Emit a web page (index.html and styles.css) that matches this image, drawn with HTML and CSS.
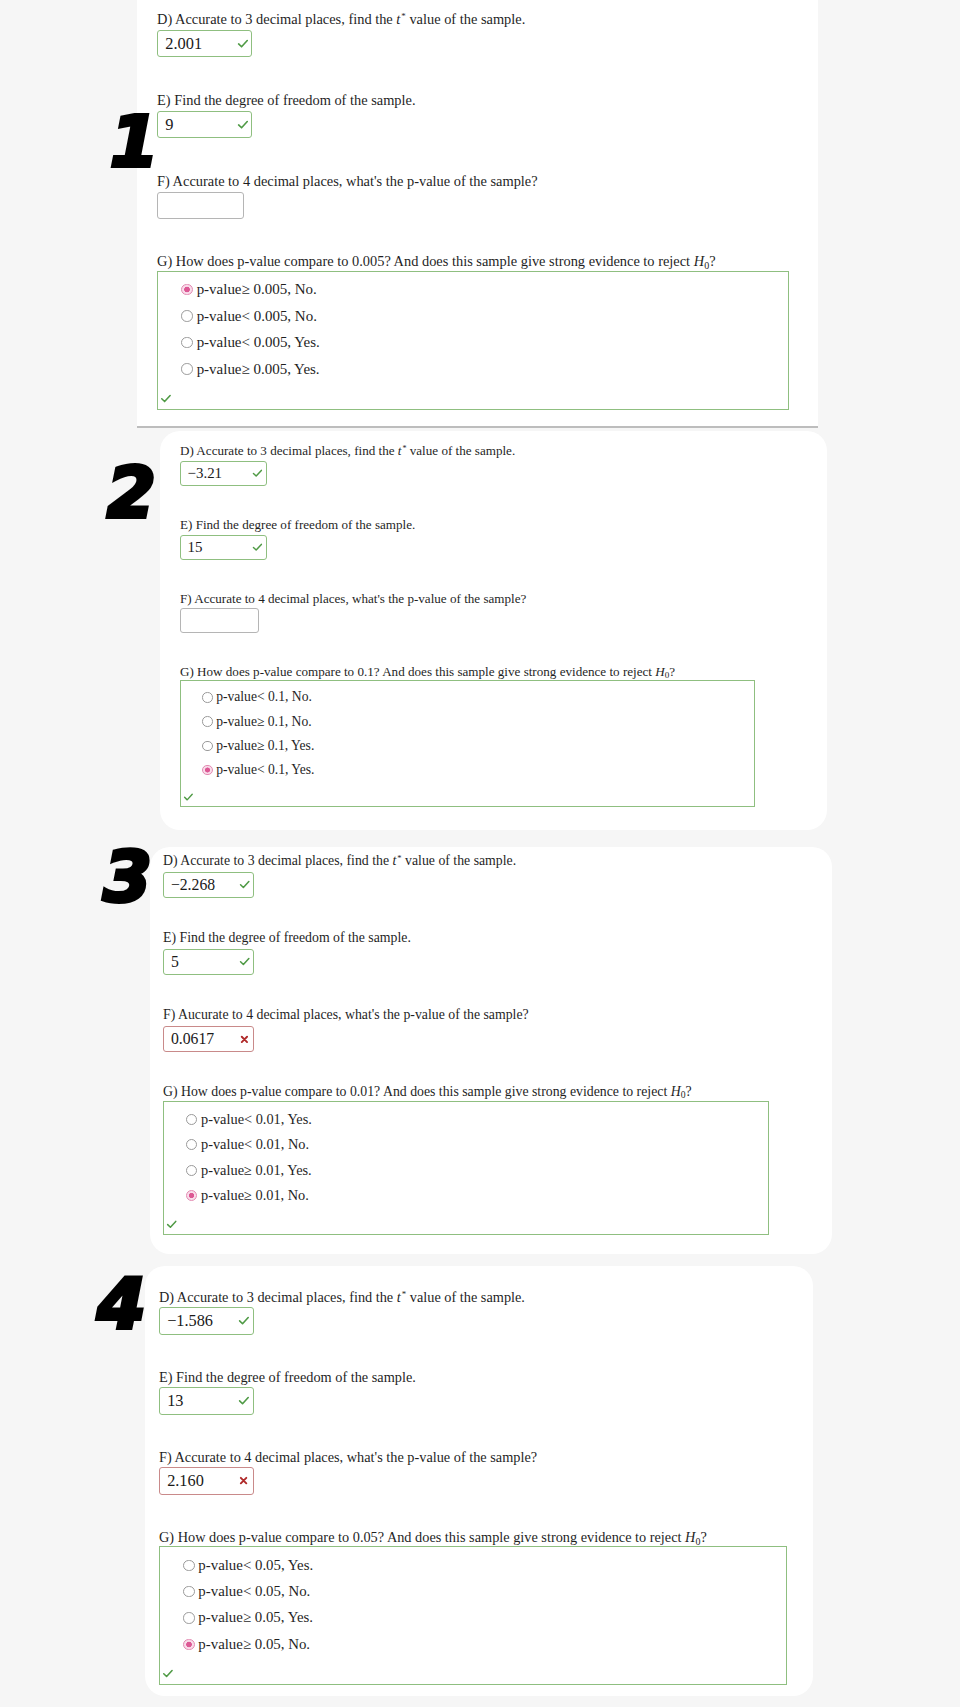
FILE: index.html
```html
<!DOCTYPE html>
<html>
<head>
<meta charset="utf-8">
<link rel="stylesheet" href="styles.css">
</head>
<body>
<div class="page">

<section class="panel p1">
  <span class="num n1">1</span>
  <div class="q">
    <div class="label">D) Accurate to 3 decimal places, find the <i>t</i><sup class="sup">*</sup> value of the sample.</div>
    <div class="field ok"><span class="val">2.001</span><svg class="tick" viewBox="0 0 12 10"><path d="M1.5 5.2 L4.6 8.2 L10.6 1.6"/></svg></div>
  </div>
  <div class="q">
    <div class="label">E) Find the degree of freedom of the sample.</div>
    <div class="field ok"><span class="val">9</span><svg class="tick" viewBox="0 0 12 10"><path d="M1.5 5.2 L4.6 8.2 L10.6 1.6"/></svg></div>
  </div>
  <div class="q">
    <div class="label">F) Accurate to 4 decimal places, what's the p-value of the sample?</div>
    <div class="field empty"></div>
  </div>
  <div class="q last">
    <div class="label">G) How does p-value compare to 0.005? And does this sample give strong evidence to reject <i>H</i><sub class="sub">0</sub>?</div>
    <div class="choices">
      <div class="opt"><span class="radio on"></span>p-value≥ 0.005, No.</div>
      <div class="opt"><span class="radio"></span>p-value&lt; 0.005, No.</div>
      <div class="opt"><span class="radio"></span>p-value&lt; 0.005, Yes.</div>
      <div class="opt"><span class="radio"></span>p-value≥ 0.005, Yes.</div>
      <div class="mark"><svg class="tick" viewBox="0 0 12 10"><path d="M1.5 5.2 L4.6 8.2 L10.6 1.6"/></svg></div>
    </div>
  </div>
</section>

<section class="panel p2">
  <span class="num n2">2</span>
  <div class="q">
    <div class="label">D) Accurate to 3 decimal places, find the <i>t</i><sup class="sup">*</sup> value of the sample.</div>
    <div class="field ok"><span class="val">−3.21</span><svg class="tick" viewBox="0 0 12 10"><path d="M1.5 5.2 L4.6 8.2 L10.6 1.6"/></svg></div>
  </div>
  <div class="q">
    <div class="label">E) Find the degree of freedom of the sample.</div>
    <div class="field ok"><span class="val">15</span><svg class="tick" viewBox="0 0 12 10"><path d="M1.5 5.2 L4.6 8.2 L10.6 1.6"/></svg></div>
  </div>
  <div class="q">
    <div class="label">F) Accurate to 4 decimal places, what's the p-value of the sample?</div>
    <div class="field empty"></div>
  </div>
  <div class="q last">
    <div class="label">G) How does p-value compare to 0.1? And does this sample give strong evidence to reject <i>H</i><sub class="sub">0</sub>?</div>
    <div class="choices">
      <div class="opt"><span class="radio"></span>p-value&lt; 0.1, No.</div>
      <div class="opt"><span class="radio"></span>p-value≥ 0.1, No.</div>
      <div class="opt"><span class="radio"></span>p-value≥ 0.1, Yes.</div>
      <div class="opt"><span class="radio on"></span>p-value&lt; 0.1, Yes.</div>
      <div class="mark"><svg class="tick" viewBox="0 0 12 10"><path d="M1.5 5.2 L4.6 8.2 L10.6 1.6"/></svg></div>
    </div>
  </div>
</section>

<section class="panel p3">
  <span class="num n3">3</span>
  <div class="q">
    <div class="label">D) Accurate to 3 decimal places, find the <i>t</i><sup class="sup">*</sup> value of the sample.</div>
    <div class="field ok"><span class="val">−2.268</span><svg class="tick" viewBox="0 0 12 10"><path d="M1.5 5.2 L4.6 8.2 L10.6 1.6"/></svg></div>
  </div>
  <div class="q">
    <div class="label">E) Find the degree of freedom of the sample.</div>
    <div class="field ok"><span class="val">5</span><svg class="tick" viewBox="0 0 12 10"><path d="M1.5 5.2 L4.6 8.2 L10.6 1.6"/></svg></div>
  </div>
  <div class="q">
    <div class="label">F) Aucurate to 4 decimal places, what's the p-value of the sample?</div>
    <div class="field bad"><span class="val">0.0617</span><svg class="cross" viewBox="0 0 10 10"><path d="M2 2 L8 8 M8 2 L2 8"/></svg></div>
  </div>
  <div class="q last">
    <div class="label">G) How does p-value compare to 0.01? And does this sample give strong evidence to reject <i>H</i><sub class="sub">0</sub>?</div>
    <div class="choices">
      <div class="opt"><span class="radio"></span>p-value&lt; 0.01, Yes.</div>
      <div class="opt"><span class="radio"></span>p-value&lt; 0.01, No.</div>
      <div class="opt"><span class="radio"></span>p-value≥ 0.01, Yes.</div>
      <div class="opt"><span class="radio on"></span>p-value≥ 0.01, No.</div>
      <div class="mark"><svg class="tick" viewBox="0 0 12 10"><path d="M1.5 5.2 L4.6 8.2 L10.6 1.6"/></svg></div>
    </div>
  </div>
</section>

<section class="panel p4">
  <span class="num n4">4</span>
  <div class="q">
    <div class="label">D) Accurate to 3 decimal places, find the <i>t</i><sup class="sup">*</sup> value of the sample.</div>
    <div class="field ok"><span class="val">−1.586</span><svg class="tick" viewBox="0 0 12 10"><path d="M1.5 5.2 L4.6 8.2 L10.6 1.6"/></svg></div>
  </div>
  <div class="q">
    <div class="label">E) Find the degree of freedom of the sample.</div>
    <div class="field ok"><span class="val">13</span><svg class="tick" viewBox="0 0 12 10"><path d="M1.5 5.2 L4.6 8.2 L10.6 1.6"/></svg></div>
  </div>
  <div class="q">
    <div class="label">F) Accurate to 4 decimal places, what's the p-value of the sample?</div>
    <div class="field bad"><span class="val">2.160</span><svg class="cross" viewBox="0 0 10 10"><path d="M2 2 L8 8 M8 2 L2 8"/></svg></div>
  </div>
  <div class="q last">
    <div class="label">G) How does p-value compare to 0.05? And does this sample give strong evidence to reject <i>H</i><sub class="sub">0</sub>?</div>
    <div class="choices">
      <div class="opt"><span class="radio"></span>p-value&lt; 0.05, Yes.</div>
      <div class="opt"><span class="radio"></span>p-value&lt; 0.05, No.</div>
      <div class="opt"><span class="radio"></span>p-value≥ 0.05, Yes.</div>
      <div class="opt"><span class="radio on"></span>p-value≥ 0.05, No.</div>
      <div class="mark"><svg class="tick" viewBox="0 0 12 10"><path d="M1.5 5.2 L4.6 8.2 L10.6 1.6"/></svg></div>
    </div>
  </div>
</section>

</div>
</body>
</html>
```

FILE: styles.css
```css
* { box-sizing: border-box; }

html, body {
  margin: 0;
  background: #f6f6f6;
}

body {
  font-family: "Liberation Serif", "Times New Roman", serif;
  color: #1f1f1f;
}

.page {
  padding-bottom: 12px;
}

.panel {
  position: relative;
  background: #ffffff;
  font-size: var(--fs);
}

.p1 {
  --fs: 14.4px; --gap: 34.5px; --fh: 27px; --fm: 2px;
  margin-left: 137px;
  width: 681px;
  padding: 11px 0 16px 20px;
  border-bottom: 2px solid #bdbdbd;
}

.p2 {
  --fs: 13.1px; --gap: 31px; --fh: 25px; --fm: 2px;
  margin: 3px 0 0 160px;
  width: 667px;
  padding: 12px 0 23px 20px;
  border-radius: 20px;
}

.p3 {
  --fs: 13.8px; --gap: 32.5px; --fh: 26px; --fm: 2px;
  margin: 17px 0 0 150px;
  width: 682px;
  padding: 6px 0 19px 13px;
  border-radius: 20px;
}

.p4 {
  --fs: 14.3px; --gap: 34.5px; --fh: 27.5px; --fm: 1px;
  margin: 12px 0 0 145px;
  width: 668px;
  padding: 23px 0 11px 14px;
  border-radius: 20px;
}

/* big annotation numerals */
.num {
  position: absolute;
  font-family: "DejaVu Sans", sans-serif;
  font-weight: 700;
  font-style: italic;
  font-size: 70px;
  line-height: 1;
  color: #000;
  -webkit-text-stroke: 4px #000;
}
.n1 { left: -27px; top: 107px; }
.n2 { left: -53px; top: 27px; }
.n3 { left: -47px; top: -5px; }
.n4 { left: -48px; top: 3px; }

/* questions */
.q {
  margin-bottom: var(--gap);
}
.q.last {
  margin-bottom: 0;
}

.label {
  line-height: 1.2em;
  white-space: nowrap;
}

.sup {
  font-size: 0.62em;
  line-height: 0;
  vertical-align: 0.55em;
  margin-left: 1px;
}
.sub {
  font-size: 0.7em;
  line-height: 0;
  vertical-align: -0.25em;
}

.field {
  margin-top: var(--fm);
  height: var(--fh);
  width: 6.62em;
  border: 1px solid #a9a9a9;
  border-radius: 3px;
  display: flex;
  align-items: center;
  justify-content: space-between;
  padding: 0 0.2em 0 0.5em;
}
.field.empty {
  width: 6.02em;
  border-color: #b5b5b5;
}
.field.ok {
  border-color: #8fbf80;
}
.field.bad {
  border-color: #c98a8a;
}

.val {
  font-size: 1.14em;
  color: #1a1a1a;
}

.tick {
  width: 0.82em;
  height: 0.66em;
  fill: none;
  stroke: #4f9a45;
  stroke-width: 1.7;
  stroke-linecap: round;
  stroke-linejoin: round;
}

.cross {
  width: 0.64em;
  height: 0.64em;
  margin-right: 0.12em;
  fill: none;
  stroke: #b02a2a;
  stroke-width: 2.1;
  stroke-linecap: round;
}

/* multiple choice box */
.choices {
  width: 43.9em;
  height: 9.7em;
  border: 1px solid #8fbf80;
  padding-top: 0.32em;
}

.opt {
  height: 1.774em;
  display: flex;
  align-items: center;
  padding-left: 1.56em;
  font-size: 1.04em;
  white-space: nowrap;
}

.radio {
  width: 0.77em;
  height: 0.77em;
  border: 1px solid #9a9a9a;
  border-radius: 50%;
  background: #fff;
  margin-right: 0.25em;
  flex: none;
}
.radio.on {
  border-color: #e38ab2;
  background: radial-gradient(circle, #dc5894 0 38%, #f9dcea 46%);
}

.mark {
  height: 1.98em;
  padding: 0.3em 0 0 0.14em;
  display: flex;
  align-items: center;
}
.mark .tick {
  width: 0.82em;
  height: 0.64em;
}
```
